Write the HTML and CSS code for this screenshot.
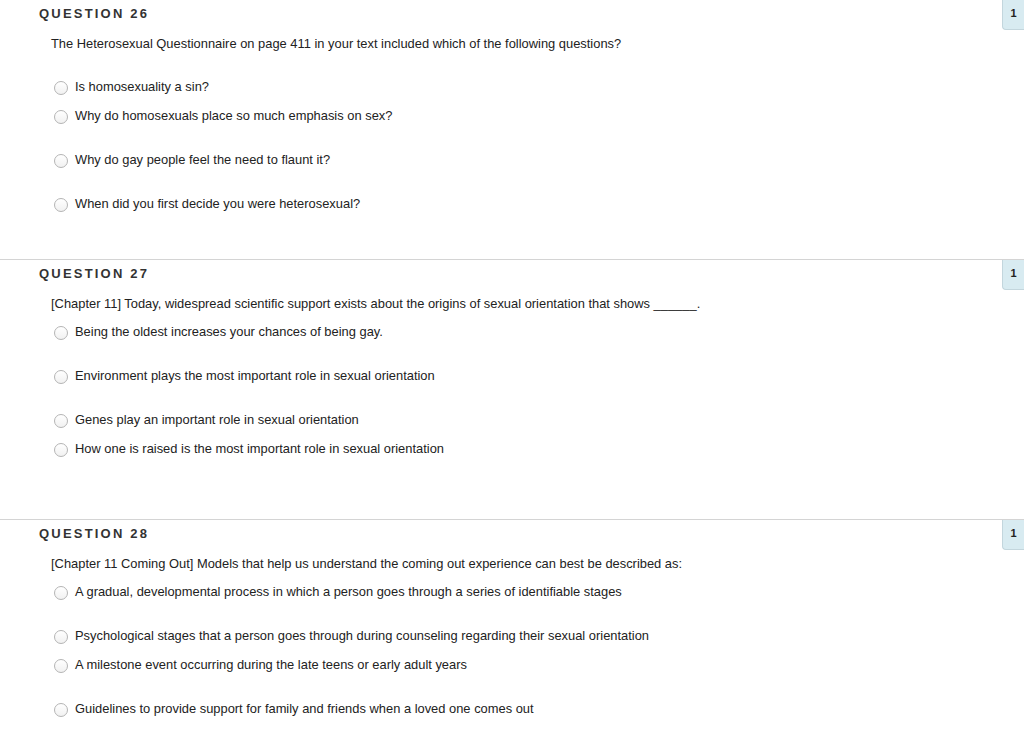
FILE: index.html
```html
<!DOCTYPE html>
<html>
<head>
<meta charset="utf-8">
<link rel="stylesheet" href="styles.css">
</head>
<body>
<div class="question">
  <div class="points">1</div>
  <h3 class="title">QUESTION 26</h3>
  <p class="prompt">The Heterosexual Questionnaire on page 411 in your text included which of the following questions?</p>
  <ul class="options">
    <li class="option spaced"><span class="radio"></span>Is homosexuality a sin?</li>
    <li class="option"><span class="radio"></span>Why do homosexuals place so much emphasis on sex?</li>
    <li class="option spaced"><span class="radio"></span>Why do gay people feel the need to flaunt it?</li>
    <li class="option spaced"><span class="radio"></span>When did you first decide you were heterosexual?</li>
  </ul>
</div>
<div class="question">
  <div class="points">1</div>
  <h3 class="title">QUESTION 27</h3>
  <p class="prompt">[Chapter 11] Today, widespread scientific support exists about the origins of sexual orientation that shows ______.</p>
  <ul class="options">
    <li class="option"><span class="radio"></span>Being the oldest increases your chances of being gay.</li>
    <li class="option spaced"><span class="radio"></span>Environment plays the most important role in sexual orientation</li>
    <li class="option spaced"><span class="radio"></span>Genes play an important role in sexual orientation</li>
    <li class="option"><span class="radio"></span>How one is raised is the most important role in sexual orientation</li>
  </ul>
</div>
<div class="question last">
  <div class="points">1</div>
  <h3 class="title">QUESTION 28</h3>
  <p class="prompt">[Chapter 11 Coming Out] Models that help us understand the coming out experience can best be described as:</p>
  <ul class="options">
    <li class="option"><span class="radio"></span>A gradual, developmental process in which a person goes through a series of identifiable stages</li>
    <li class="option spaced"><span class="radio"></span>Psychological stages that a person goes through during counseling regarding their sexual orientation</li>
    <li class="option"><span class="radio"></span>A milestone event occurring during the late teens or early adult years</li>
    <li class="option spaced"><span class="radio"></span>Guidelines to provide support for family and friends when a loved one comes out</li>
  </ul>
</div>
</body>
</html>
```

FILE: styles.css
```css
html, body {
  margin: 0;
  padding: 0;
  background: #fff;
}
body {
  font-family: "Liberation Sans", Arial, Helvetica, sans-serif;
  color: #222;
  font-size: 12.9px;
  width: 1024px;
  overflow: hidden;
}
.question {
  position: relative;
  height: 259px;
  border-bottom: 1px solid #d4d4d4;
  box-sizing: content-box;
}
.question.last {
  border-bottom: none;
}
.points {
  position: absolute;
  top: 0;
  right: 0;
  width: 21px;
  height: 29px;
  background: #d8ebf1;
  border-left: 1px solid #c3d6dd;
  border-bottom: 1px solid #c3d6dd;
  border-bottom-left-radius: 4px;
  font-weight: bold;
  font-size: 11px;
  line-height: 27px;
  text-align: center;
  color: #222;
  box-sizing: content-box;
}
.title {
  margin: 0;
  padding: 6px 0 0 39px;
  font-size: 13px;
  line-height: 16px;
  font-weight: bold;
  letter-spacing: 2.2px;
  color: #333;
}
.prompt {
  margin: 14px 0 0 0;
  padding-left: 51px;
  line-height: 16px;
  font-size: 12.9px;
}
.options {
  list-style: none;
  margin: 12px 0 0 0;
  padding: 0 0 0 54px;
  display: flex;
  flex-direction: column;
  gap: 13px;
}
.option {
  display: flex;
  align-items: center;
  height: 16px;
  line-height: 16px;
}
.option.spaced {
  margin-top: 15px;
}
.radio {
  width: 12px;
  height: 12px;
  border: 1px solid #b4b4b4;
  border-radius: 50%;
  background: linear-gradient(#ffffff, #f1f1f1);
  margin-right: 7px;
  flex: none;
  margin-top: 1px;
}
```
